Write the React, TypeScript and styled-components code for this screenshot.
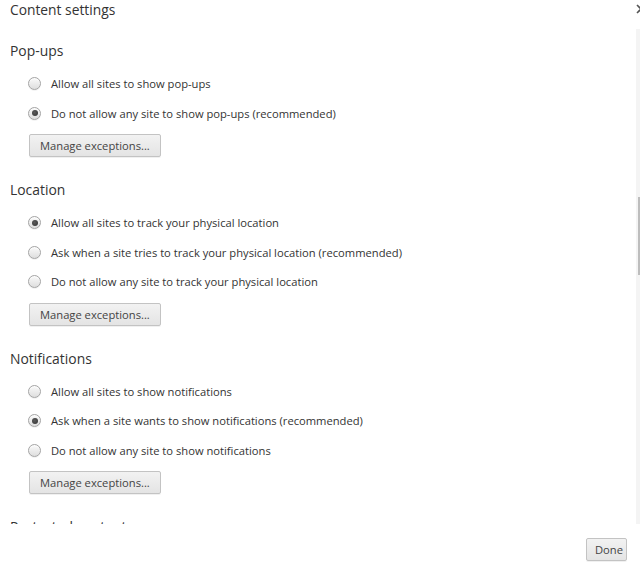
import React from 'react';
import styled, { createGlobalStyle } from 'styled-components';

const GlobalStyle = createGlobalStyle`
  html, body {
    margin: 0;
    padding: 0;
    background: #fff;
  }
  body {
    font-family: "Open Sans", "Liberation Sans", sans-serif;
    color: #333;
  }
`;

const Page = styled.div`
  width: 640px;
  height: 566px;
  display: flex;
  flex-direction: column;
  overflow: hidden;
  background: #fff;
`;

const Header = styled.div`
  height: 30px;
  flex: 0 0 30px;
  display: flex;
  justify-content: space-between;
  align-items: flex-start;
  padding-left: 10px;
`;

const Title = styled.h1`
  margin: 0;
  font-size: 13.8px;
  font-weight: 400;
  line-height: 20px;
  color: #333;
`;

const Close = styled.div`
  width: 10px;
  height: 10px;
  margin-top: -3px;
  margin-right: -6px;
`;

const Body = styled.div`
  flex: 1;
  display: flex;
  min-height: 0;
`;

const Scroll = styled.div`
  flex: 1;
  overflow: hidden;
  padding-top: 11px;
`;

const Track = styled.div`
  flex: 0 0 4px;
  width: 4px;
  margin-top: -1px;
  background: #f4f4f4;
  display: flex;
  flex-direction: column;
  align-items: center;
  padding-top: 168px;
`;

const Thumb = styled.div`
  width: 2px;
  height: 78px;
  background: #bdbdbd;
  margin-left: 1px;
`;

const Section = styled.section`
  margin-bottom: 23px;
`;

const Heading = styled.h3`
  margin: 0 0 8px 10px;
  font-size: 13.9px;
  font-weight: 400;
  line-height: 20px;
  color: #333;
`;

const Row = styled.label`
  height: 29.5px;
  display: flex;
  align-items: center;
  padding-left: 28px;
  font-size: 11.2px;
  color: #333;
`;

const Radio = styled.span<{ $checked?: boolean }>`
  width: 11px;
  height: 11px;
  border-radius: 50%;
  border: 1px solid #a4a4a4;
  background: linear-gradient(#fafafa, #dedede);
  box-shadow: inset 0 1px 1px rgba(255, 255, 255, 0.8), 0 1px 0 rgba(0, 0, 0, 0.05);
  margin-right: 10px;
  display: flex;
  align-items: center;
  justify-content: center;
  &::after {
    content: '';
    display: ${p => (p.$checked ? 'block' : 'none')};
    width: 6px;
    height: 6px;
    border-radius: 50%;
    background: radial-gradient(circle at 40% 40%, #5a5a5a, #333);
  }
`;

const Button = styled.button`
  font-family: "Open Sans", "Liberation Sans", sans-serif;
  font-size: 11.2px;
  color: #444;
  height: 23px;
  padding: 0 10px;
  border: 1px solid #c3c3c3;
  border-radius: 2px;
  background: linear-gradient(#f2f2f2, #e4e4e4);
  box-shadow: 0 1px 0 rgba(0, 0, 0, 0.06);
  cursor: default;
`;

const ButtonRow = styled.div`
  padding-left: 29px;
  margin-top: 6px;
  display: flex;
`;

const Footer = styled.div`
  flex: 0 0 42px;
  display: flex;
  justify-content: flex-end;
  align-items: flex-end;
  padding: 0 13px 5px 0;
  box-sizing: border-box;
`;

const DoneButton = styled(Button)`
  padding: 0 8px;
  width: 41px;
`;

type Option = { label: string; checked?: boolean };
type Group = { title: string; options: Option[]; manage?: boolean };

const groups: Group[] = [
  {
    title: 'Pop-ups',
    options: [
      { label: 'Allow all sites to show pop-ups' },
      { label: 'Do not allow any site to show pop-ups (recommended)', checked: true },
    ],
    manage: true,
  },
  {
    title: 'Location',
    options: [
      { label: 'Allow all sites to track your physical location', checked: true },
      { label: 'Ask when a site tries to track your physical location (recommended)' },
      { label: 'Do not allow any site to track your physical location' },
    ],
    manage: true,
  },
  {
    title: 'Notifications',
    options: [
      { label: 'Allow all sites to show notifications' },
      { label: 'Ask when a site wants to show notifications (recommended)', checked: true },
      { label: 'Do not allow any site to show notifications' },
    ],
    manage: true,
  },
  {
    title: 'Protected content',
    options: [],
  },
];

const App = () => {
  return (
    <>
      <GlobalStyle />
      <Page>
        <Header>
          <Title>Content settings</Title>
          <Close>
            <svg width="10" height="10" viewBox="0 0 10 10">
              <path d="M1 1 L9 9 M9 1 L1 9" stroke="#555" strokeWidth="1.6" />
            </svg>
          </Close>
        </Header>
        <Body>
          <Scroll>
            {groups.map(g => (
              <Section key={g.title}>
                <Heading>{g.title}</Heading>
                {g.options.map(o => (
                  <Row key={o.label}>
                    <Radio $checked={o.checked} />
                    {o.label}
                  </Row>
                ))}
                {g.manage && (
                  <ButtonRow>
                    <Button>Manage exceptions...</Button>
                  </ButtonRow>
                )}
              </Section>
            ))}
          </Scroll>
          <Track>
            <Thumb />
          </Track>
        </Body>
        <Footer>
          <DoneButton>Done</DoneButton>
        </Footer>
      </Page>
    </>
  );
};

export default App;
